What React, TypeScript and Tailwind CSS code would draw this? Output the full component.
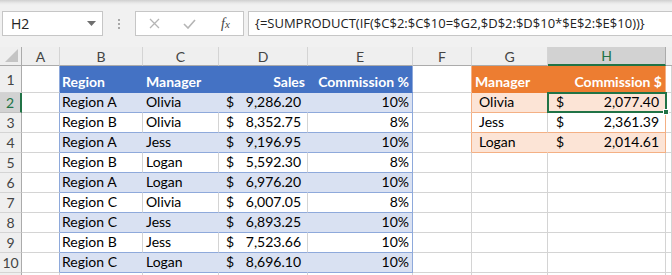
import React from "react";

const GRID = "border-r-[#d4d4d4]";
const GRID_B = "border-b-[#d4d4d4]";

const cols = [
  { key: "A", w: "w-[38px]" },
  { key: "B", w: "w-[83px]" },
  { key: "C", w: "w-[76px]" },
  { key: "D", w: "w-[89px]" },
  { key: "E", w: "w-[105px]" },
  { key: "F", w: "w-[59px]" },
  { key: "G", w: "w-[76px]" },
  { key: "H", w: "w-[118px]" },
];

const sales = [
  ["Region A", "Olivia", "9,286.20", "10%"],
  ["Region B", "Olivia", "8,352.75", "8%"],
  ["Region A", "Jess", "9,196.95", "10%"],
  ["Region B", "Logan", "5,592.30", "8%"],
  ["Region A", "Logan", "6,976.20", "10%"],
  ["Region C", "Olivia", "6,007.05", "8%"],
  ["Region C", "Jess", "6,893.25", "10%"],
  ["Region B", "Jess", "7,523.66", "10%"],
  ["Region C", "Logan", "8,696.10", "10%"],
];

const summary = [
  ["Olivia", "2,077.40"],
  ["Jess", "2,361.39"],
  ["Logan", "2,014.61"],
];

type CellProps = {
  w: string;
  cls?: string;
  children?: React.ReactNode;
};

const Cell = ({ w, cls = `bg-white ${GRID} ${GRID_B}`, children }: CellProps) => (
  <div className={`${w} shrink-0 h-full border-r border-b box-border flex items-end overflow-hidden whitespace-nowrap pb-[1px] leading-[18px] ${cls}`}>
    {children}
  </div>
);

const RowHead = ({ n, active }: { n: number; active?: boolean }) => (
  <div
    className={`w-[22px] shrink-0 h-full box-border border-b flex items-center justify-center text-[14px] ${
      active
        ? "bg-[#d2d2d2] border-b-[#c0c0c0] border-r-2 border-r-[#217346] text-[#217346]"
        : "bg-[#efefef] border-b-[#d4d4d4] border-r border-r-[#ababab] text-[#444]"
    }`}
  >
    {n <= 10 ? n : ""}
  </div>
);

function row(i: number) {
  // i = spreadsheet row number 1..11
  const inBlue = i >= 1 && i <= 10;
  const inOrange = i >= 1 && i <= 4;
  const blueHead = i === 1;
  const blueBand = i % 2 === 0;
  const orangeBand = i === 2 || i === 4;

  const blueCell = (last: boolean) => {
    if (blueHead)
      return `bg-[#4472c4] text-white font-bold border-b-[#4472c4] ${last ? "border-r-[#8ea9db]" : "border-r-[#4472c4]"}`;
    if (blueBand)
      return `bg-[#d9e1f2] border-b-[#8ea9db] ${last ? "border-r-[#8ea9db]" : "border-r-[#d9e1f2]"}`;
    return `bg-white border-b-[#8ea9db] ${last ? "border-r-[#8ea9db]" : GRID}`;
  };

  const orangeCell = (last: boolean) => {
    if (i === 1)
      return `bg-[#ed7d31] text-white font-bold border-b-[#ed7d31] ${last ? "border-r-[#f4b084]" : "border-r-[#ed7d31]"}`;
    if (orangeBand)
      return `bg-[#fce4d6] border-b-[#f4b084] ${last ? "border-r-[#f4b084]" : "border-r-[#fce4d6]"}`;
    return `bg-white border-b-[#f4b084] ${last ? "border-r-[#f4b084]" : GRID}`;
  };

  const d = i >= 2 && i <= 10 ? sales[i - 2] : null;
  const s = i >= 2 && i <= 4 ? summary[i - 2] : null;

  return (
    <div key={i} className={`flex ${i === 1 ? "h-[27px]" : "h-[20px]"}`}>
      <RowHead n={i} active={i === 2} />
      <Cell w="w-[38px]" cls={`bg-white ${GRID_B} ${inBlue ? "border-r-[#8ea9db]" : GRID}`} />
      {inBlue ? (
        <>
          <Cell w="w-[83px]" cls={`${blueCell(false)} pl-[2px]`}>{blueHead ? "Region" : d?.[0]}</Cell>
          <Cell w="w-[76px]" cls={`${blueCell(false)} pl-[3px]`}>{blueHead ? "Manager" : d?.[1]}</Cell>
          <Cell w="w-[89px]" cls={`${blueCell(false)} ${blueHead ? "justify-end pr-[2px]" : "justify-between pl-[7px] pr-[6px]"}`}>
            {blueHead ? "Sales" : (
              <>
                <span>$</span>
                <span>{d?.[2]}</span>
              </>
            )}
          </Cell>
          <Cell w="w-[105px]" cls={`${blueCell(true)} justify-end pr-[3px]`}>{blueHead ? "Commission %" : d?.[3]}</Cell>
        </>
      ) : (
        <>
          <Cell w="w-[83px]" />
          <Cell w="w-[76px]" />
          <Cell w="w-[89px]" />
          <Cell w="w-[105px]" />
        </>
      )}
      <Cell w="w-[59px]" cls={`bg-white ${GRID_B} ${inOrange ? "border-r-[#f4b084]" : GRID}`} />
      {inOrange ? (
        <>
          <Cell w="w-[76px]" cls={`${orangeCell(false)} pl-[3px]`}>{i === 1 ? "Manager" : <span className="pl-[4px]">{s?.[0]}</span>}</Cell>
          <Cell w="w-[118px]" cls={`${orangeCell(true)} ${i === 1 ? "justify-end pr-[3px]" : "justify-between pl-[8px] pr-[6px]"}`}>
            {i === 1 ? "Commission $" : (
              <>
                <span>$</span>
                <span>{s?.[1]}</span>
              </>
            )}
          </Cell>
        </>
      ) : (
        <>
          <Cell w="w-[76px]" />
          <Cell w="w-[118px]" />
        </>
      )}
      <Cell w="flex-1" />
    </div>
  );
}

export default function App() {
  return (
    <div className="relative w-[672px] h-[275px] overflow-hidden bg-white text-black" style={{ fontFamily: "Lato, 'Open Sans', sans-serif" }}>
      {/* Formula bar */}
      <div className="h-[47px] bg-[#f1f1f1] relative flex items-start pt-[11px]" style={{ background: "linear-gradient(#cfcfcf 0px, #e9e9e9 3px, #f1f1f1 5px)" }}>
        <div className="ml-[2px] w-[101px] h-[25px] bg-white border border-[#c6c6c6] box-border flex items-center justify-between pl-[8px] pr-[6px] text-[14px] text-[#222]" style={{ fontFamily: "'Open Sans', sans-serif" }}>
          <span>H2</span>
          <svg width="9" height="5" viewBox="0 0 9 5"><path d="M0 0h9L4.5 5z" fill="#6f6f6f" /></svg>
        </div>
        <div className="w-[32px] h-[25px] flex flex-col items-center justify-center gap-[2px]">
          <span className="w-[2px] h-[2px] bg-[#a8a8a8]" />
          <span className="w-[2px] h-[2px] bg-[#a8a8a8]" />
          <span className="w-[2px] h-[2px] bg-[#a8a8a8]" />
        </div>
        <div className="w-[109px] h-[25px] bg-white border border-[#c6c6c6] box-border flex items-center">
          <svg className="ml-[13px]" width="11" height="11" viewBox="0 0 11 11"><path d="M1 1l9 9M10 1l-9 9" stroke="#b5b5b5" strokeWidth="1.3" /></svg>
          <svg className="ml-[23px]" width="13" height="10" viewBox="0 0 13 10"><path d="M1 5l4 4 7-8" stroke="#b5b5b5" strokeWidth="1.6" fill="none" /></svg>
          <span className="ml-[25px] text-[14px] italic text-[#444]" style={{ fontFamily: "'Liberation Serif', serif" }}>
            f<span className="text-[11px]">x</span>
          </span>
        </div>
        <div className="ml-[4px] flex-1 h-[25px] bg-white border border-[#c6c6c6] border-r-0 box-border flex items-center pl-[6px] text-[13px] text-[#222] whitespace-nowrap" style={{ fontFamily: "'Open Sans', sans-serif" }}>
          {"{=SUMPRODUCT(IF($C$2:$C$10=$G2,$D$2:$D$10*$E$2:$E$10))}"}
        </div>
      </div>

      {/* Column headers */}
      <div className="flex h-[19px] text-[14px] text-[#444]">
        <div className="w-[22px] shrink-0 h-full bg-[#efefef] border-r border-b border-[#ababab] box-border relative">
          <svg className="absolute right-[3px] bottom-[3px]" width="13" height="13" viewBox="0 0 13 13"><path d="M13 0v13H0z" fill="#c4c4c4" /></svg>
        </div>
        {cols.map((c) =>
          c.key === "H" ? (
            <div key={c.key} className={`${c.w} shrink-0 h-full bg-[#d2d2d2] border-r border-r-[#ababab] border-b-2 border-b-[#217346] box-border flex items-center justify-center text-[#217346]`}>
              {c.key}
            </div>
          ) : (
            <div key={c.key} className={`${c.w} shrink-0 h-full bg-[#efefef] border-r border-b border-r-[#d4d4d4] border-b-[#ababab] box-border flex items-center justify-center`}>
              {c.key}
            </div>
          )
        )}
        <div className="flex-1 h-full bg-[#efefef] border-b border-[#ababab] box-border" />
      </div>

      {/* Grid */}
      <div className="text-[14px]">
        {[1, 2, 3, 4, 5, 6, 7, 8, 9, 10, 11].map((i) => row(i))}
      </div>

      {/* Active cell H2 */}
      <div className="absolute left-[547px] top-[92px] w-[120px] h-[21px] border-2 border-[#217346] pointer-events-none" />
      <div className="absolute left-[663px] top-[109px] w-[6px] h-[6px] bg-[#217346] border border-white pointer-events-none" />
    </div>
  );
}
